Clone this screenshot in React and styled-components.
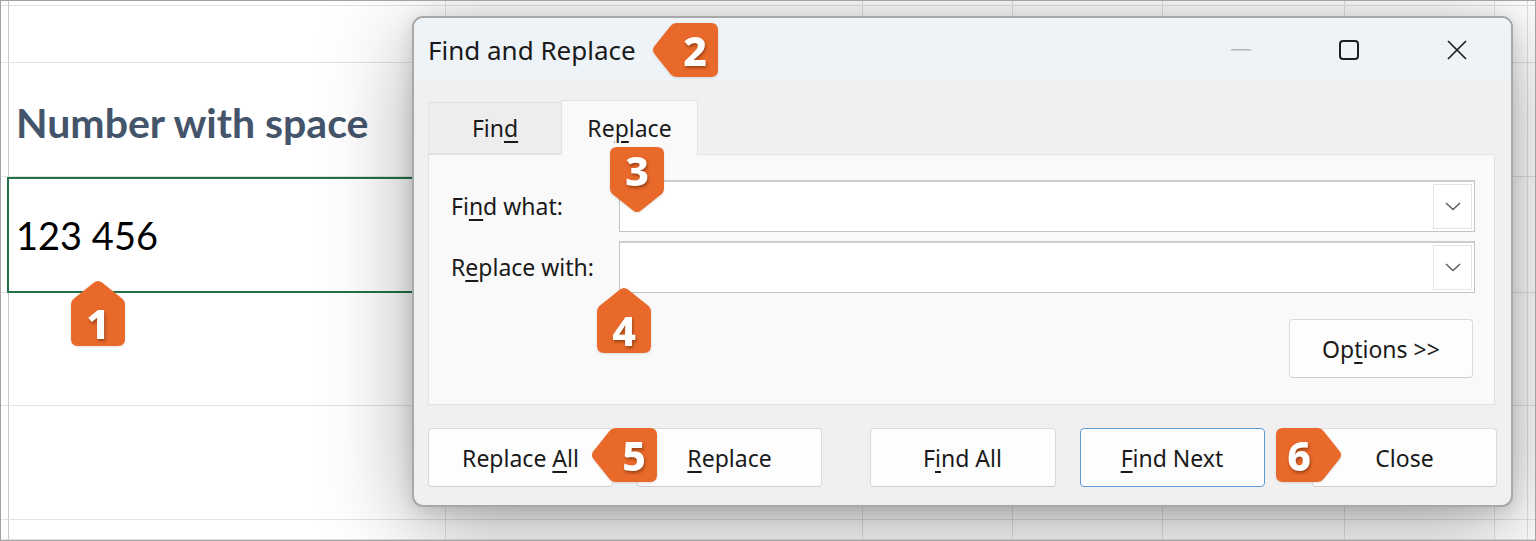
import React from 'react'
import styled, { createGlobalStyle } from 'styled-components'

const GlobalStyle = createGlobalStyle`
  html, body {
    margin: 0px;
    padding: 0px;
    background: #ffffff;
  }
  body {
    width: 1536px;
    height: 541px;
    overflow: hidden;
  }
`

const Page = styled.div`
  position: relative;
  width: 1536px;
  height: 541px;
  box-sizing: border-box;
  border: 1px solid #a3a3a3;
  background: #ffffff;
  overflow: hidden;
`

// spreadsheet behind the dialog
const Sheet = styled.div`
  display: grid;
  width: 100%;
  height: 100%;
  grid-template-columns: 8px 437px 417px 150px 150px 182px 150px 33px 1fr;
  grid-template-rows: 5px 57px 114px 116px 113px 114px 1fr;
  font-family: Lato, "Liberation Sans", sans-serif;
`

const Cell = styled.div`
  box-sizing: border-box;
  display: flex;
  align-items: center;
  min-width: 0;
  padding-left: 7px;
  white-space: nowrap;
  border-right: 1px solid ${p => (p.$edge ? '#c8c8c8' : '#e2e2e2')};
  border-bottom: 1px solid #e2e2e2;
  ${p => p.$selected && `
    border: 2px solid #217346;
    margin-left: -2px;
    padding-left: 7px;
  `}
`

const Heading = styled.span`
  font-size: 41px;
  font-weight: 700;
  color: #44546a;
  padding-top: 5px;
`

const CellValue = styled.span`
  font-size: 38px;
  color: #000000;
`

const Dialog = styled.div`
  position: absolute;
  left: 411px;
  top: 15px;
  width: 1101px;
  height: 491px;
  box-sizing: border-box;
  border: 2px solid #a8a8a8;
  border-radius: 11px;
  background: #f0f0f0;
  box-shadow: 0 20px 90px rgba(0, 0, 0, 0.34), 0 4px 18px rgba(0, 0, 0, 0.14);
  overflow: hidden;
  display: flex;
  flex-direction: column;
  font-family: "Noto Sans", "Open Sans", sans-serif;
  color: #1a1a1a;
`

const TitleBar = styled.div`
  height: 64px;
  flex-shrink: 0;
  display: flex;
  align-items: center;
  padding-left: 14px;
  background: #eef3f8;
`

const Title = styled.div`
  flex: 1;
  font-size: 26px;
`

const WinButton = styled.div`
  width: 108px;
  height: 100%;
  display: flex;
  align-items: center;
  justify-content: center;
`

const Body = styled.div`
  flex: 1;
  display: flex;
  flex-direction: column;
  padding: 18px 16px 18px 14px;
`

const TabStrip = styled.div`
  height: 54px;
  display: flex;
  align-items: flex-end;
`

const Tab = styled.div`
  position: relative;
  z-index: ${p => (p.$active ? 2 : 1)};
  width: ${p => p.$w}px;
  height: ${p => (p.$active ? 55 : 52)}px;
  margin-bottom: ${p => (p.$active ? -1 : 0)}px;
  box-sizing: border-box;
  display: flex;
  align-items: center;
  justify-content: center;
  font-size: 23px;
  background: ${p => (p.$active ? '#f9f9f9' : '#ededed')};
  border: 1px solid #e2e2e2;
  border-bottom: ${p => (p.$active ? 'none' : '1px solid #e2e2e2')};
  border-right: ${p => (p.$active ? '1px solid #e2e2e2' : 'none')};
`

const Panel = styled.div`
  height: 251px;
  box-sizing: border-box;
  border: 1px solid #e2e2e2;
  background: #f9f9f9;
  padding: 25px 19px 0 22px;
`

const FieldGrid = styled.div`
  display: grid;
  grid-template-columns: 168px 1fr;
  row-gap: 9px;
  align-items: center;
`

const Label = styled.div`
  font-size: 23px;
`

const Combo = styled.div`
  height: 52px;
  box-sizing: border-box;
  display: flex;
  align-items: center;
  justify-content: flex-end;
  padding-right: 2px;
  background: #ffffff;
  border: 1px solid #c3c3c3;
  border-top: 2px solid #cdcdcd;
`

const DropButton = styled.div`
  width: 39px;
  height: 45px;
  box-sizing: border-box;
  display: flex;
  align-items: center;
  justify-content: center;
  background: #ffffff;
  border: 1px solid #e4e4e4;
`

const OptionsRow = styled.div`
  display: flex;
  justify-content: flex-end;
  margin-top: 26px;
  padding-right: 2px;
`

const ButtonRow = styled.div`
  display: flex;
  justify-content: space-between;
  margin-top: 23px;
  margin-right: -2px;
`

const ButtonGroup = styled.div`
  display: flex;
  gap: 24px;
`

const ButtonBox = styled.div`
  width: ${p => p.$w || 185}px;
  height: 59px;
  box-sizing: border-box;
  display: flex;
  align-items: center;
  justify-content: center;
  font-size: 23px;
  background: #fdfdfd;
  border-radius: 4px;
  border: 1px solid ${p => (p.$primary ? '#5c9bd7' : '#dadada')};
  border-bottom-color: ${p => (p.$primary ? '#5c9bd7' : '#cdcdcd')};
`

const ButtonLabel = styled.span`
  white-space: pre;
`

function Button({ children, ...rest }) {
  return (
    <ButtonBox {...rest}>
      <ButtonLabel>{children}</ButtonLabel>
    </ButtonBox>
  )
}

const Key = styled.span`
  text-decoration: underline;
  text-decoration-thickness: 1.5px;
  text-underline-offset: 4px;
`

// numbered callouts laid over the picture
const BadgeWrap = styled.div`
  position: absolute;
  left: ${p => p.$x}px;
  top: ${p => p.$y}px;
  width: ${p => p.$w}px;
  height: ${p => p.$h}px;
  z-index: 10;
  filter: drop-shadow(0 1px 1px rgba(0, 0, 0, 0.12));

  svg {
    position: absolute;
    inset: 0;
  }
`

const BadgeNum = styled.span`
  position: absolute;
  top: ${p => (p.$dir === 'up' ? 20 : 0)}px;
  bottom: ${p => (p.$dir === 'down' ? 20 : 0)}px;
  left: ${p => (p.$dir === 'left' ? 20 : 0)}px;
  right: ${p => (p.$dir === 'right' ? 20 : 0)}px;
  display: flex;
  align-items: center;
  justify-content: center;
  font-family: "Noto Sans", "Open Sans", sans-serif;
  font-weight: 800;
  font-size: 41px;
  line-height: 1;
  color: #ffffff;
  text-shadow: 1px 2px 3px rgba(80, 30, 0, 0.5);
`

const SHAPE =
  'M0 25 Q0 21 3 18.5 L23 2.5 Q27 -0.6 31 2.5 L51 18.5 Q54 21 54 25 L54 59 Q54 66 47 66 L7 66 Q0 66 0 59 Z'

const turns = {
  up: { w: 54, h: 66, t: '' },
  down: { w: 54, h: 66, t: 'rotate(180 27 33)' },
  left: { w: 66, h: 54, t: 'translate(0 54) rotate(-90)' },
  right: { w: 66, h: 54, t: 'translate(66 0) rotate(90)' },
}

function Badge({ n, dir, x, y }) {
  const s = turns[dir]
  return (
    <BadgeWrap $x={x} $y={y} $w={s.w} $h={s.h}>
      <svg width={s.w} height={s.h} viewBox={`0 0 ${s.w} ${s.h}`}>
        <path d={SHAPE} transform={s.t} fill="#e8692a" />
      </svg>
      <BadgeNum $dir={dir}>{n}</BadgeNum>
    </BadgeWrap>
  )
}

const Chevron = () => (
  <svg width="16" height="9" viewBox="0 0 16 9">
    <path d="M1 1 L8 7.5 L15 1" fill="none" stroke="#5a5a5a" strokeWidth="1.4" />
  </svg>
)

const COLS = 9
const ROWS = 7

function App() {
  const cells = []
  for (let r = 0; r < ROWS; r++) {
    for (let c = 0; c < COLS; c++) {
      let content = null
      if (r === 2 && c === 1) content = <Heading>Number with space</Heading>
      if (r === 3 && c === 1) content = <CellValue>123 456</CellValue>
      cells.push(
        <Cell key={`${r}-${c}`} $edge={c === 0} $selected={r === 3 && c === 1}>
          {content}
        </Cell>
      )
    }
  }

  return (
    <>
      <GlobalStyle />
      <Page>
        <Sheet>{cells}</Sheet>

        <Dialog>
          <TitleBar>
            <Title>Find and Replace</Title>
            <WinButton>
              <svg width="20" height="2" viewBox="0 0 20 2">
                <rect width="20" height="1.6" fill="#b9b9b9" />
              </svg>
            </WinButton>
            <WinButton>
              <svg width="20" height="20" viewBox="0 0 20 20">
                <rect x="1" y="1" width="18" height="18" rx="3" fill="none" stroke="#1f1f1f" strokeWidth="2" />
              </svg>
            </WinButton>
            <WinButton>
              <svg width="20" height="20" viewBox="0 0 20 20">
                <path d="M1 1 L19 19 M19 1 L1 19" stroke="#1f1f1f" strokeWidth="1.7" />
              </svg>
            </WinButton>
          </TitleBar>

          <Body>
            <TabStrip>
              <Tab $w={133}>Fin<Key>d</Key></Tab>
              <Tab $w={137} $active>Re<Key>p</Key>lace</Tab>
            </TabStrip>

            <Panel>
              <FieldGrid>
                <Label>Fi<Key>n</Key>d what:</Label>
                <Combo><DropButton><Chevron /></DropButton></Combo>
                <Label>R<Key>e</Key>place with:</Label>
                <Combo><DropButton><Chevron /></DropButton></Combo>
              </FieldGrid>
              <OptionsRow>
                <Button $w={184}>Op<Key>t</Key>ions &gt;&gt;</Button>
              </OptionsRow>
            </Panel>

            <ButtonRow>
              <ButtonGroup>
                <Button>Replace <Key>A</Key>ll</Button>
                <Button><Key>R</Key>eplace</Button>
              </ButtonGroup>
              <ButtonGroup>
                <Button $w={186}>F<Key>i</Key>nd All</Button>
                <Button $primary><Key>F</Key>ind Next</Button>
              </ButtonGroup>
              <ButtonGroup>
                <Button>Close</Button>
              </ButtonGroup>
            </ButtonRow>
          </Body>
        </Dialog>

        <Badge n="1" dir="up" x={70} y={279} />
        <Badge n="2" dir="left" x={651} y={22} />
        <Badge n="3" dir="down" x={609} y={146} />
        <Badge n="4" dir="up" x={596} y={286} />
        <Badge n="5" dir="left" x={590} y={427} />
        <Badge n="6" dir="right" x={1275} y={427} />
      </Page>
    </>
  )
}

export default App
